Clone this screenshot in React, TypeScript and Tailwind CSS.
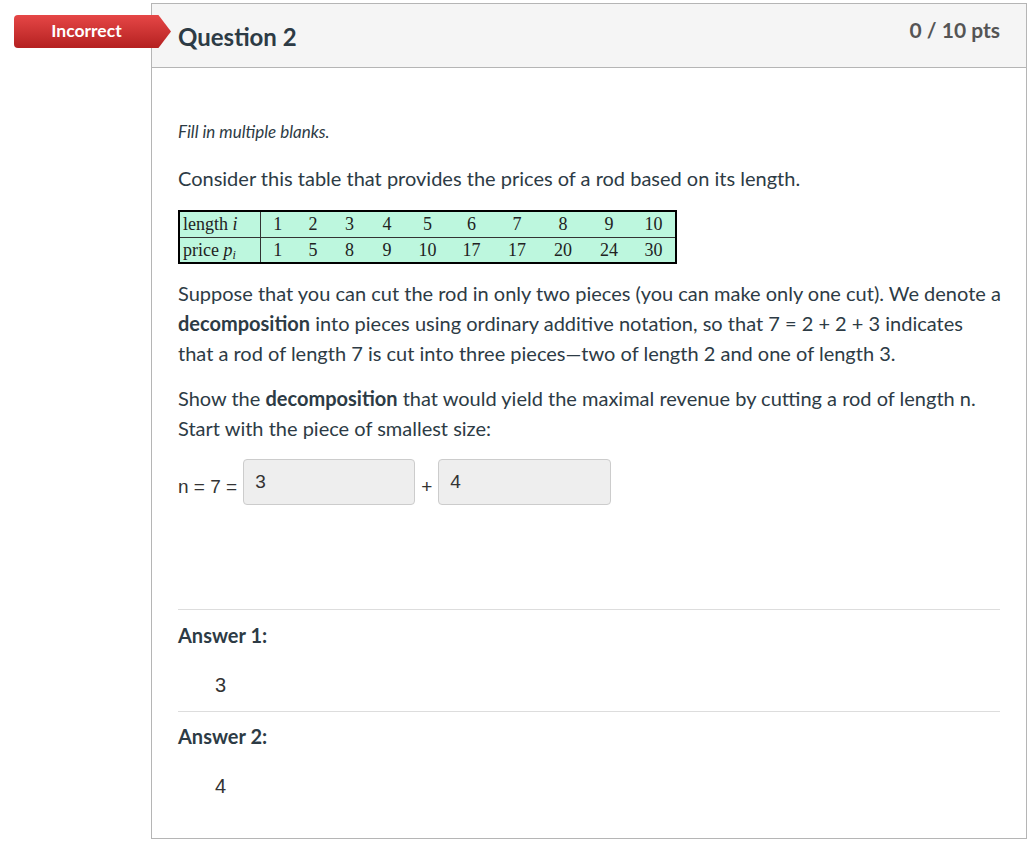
import React from 'react';

const lengths = [1, 2, 3, 4, 5, 6, 7, 8, 9, 10];
const prices = [1, 5, 8, 9, 10, 17, 17, 20, 24, 30];
const colW = ['w-[35px]', 'w-[36px]', 'w-[37px]', 'w-[38px]', 'w-[43px]', 'w-[45px]', 'w-[46px]', 'w-[46px]', 'w-[46px]', 'w-[44px]'];

function RodTable() {
  return (
    <table className="table-fixed border-2 border-black bg-[#bdf7de] font-['Liberation_Serif',serif] text-[18px] leading-[24px] text-[#222]">
      <tbody>
        <tr className="h-[26px] border-b border-[#333]">
          <td className="w-[81px] border-r border-[#333] pl-[3px]">
            length <i>i</i>
          </td>
          {lengths.map((n, i) => (
            <td key={i} className={colW[i] + ' text-center'}>
              {n}
            </td>
          ))}
        </tr>
        <tr className="h-[25px]">
          <td className="border-r border-[#333] pl-[3px]">
            price <i>p<sub className="text-[12px]">i</sub></i>
          </td>
          {prices.map((n, i) => (
            <td key={i} className="text-center">{n}</td>
          ))}
        </tr>
      </tbody>
    </table>
  );
}

export default function App() {
  return (
    <div className="relative min-h-[848px] bg-white font-['Lato','Liberation_Sans',sans-serif] text-[#2d3b45]">
      <div className="absolute left-[14px] top-[15px] z-10 flex h-[33px] w-[157px] items-center rounded-l-[4px] bg-gradient-to-b from-[#e64646] to-[#b42020] pr-[12px] [clip-path:polygon(0_0,92%_0,100%_50%,92%_100%,0_100%)]">
        <span className="w-full text-center text-[17.5px] font-bold text-white">Incorrect</span>
      </div>

      <div className="pl-[151px] pr-[6px] pt-[3px]">
        <div className="border border-[#b5b5b5]">
          <div className="flex h-[64px] items-start justify-between border-b border-[#b5b5b5] bg-[#f5f5f5] px-[26px]">
            <h2 className="pt-[18px] text-[24px] font-bold leading-[30px]">Question 2</h2>
            <div className="pt-[11px] text-[21px] font-bold leading-[30px] text-[#555]">0 / 10 pts</div>
          </div>

          <div className="pl-[26px] pr-[25px] pt-[49px] text-[20px] leading-[30px]">
            <p className="text-[17px] italic">Fill in multiple blanks.</p>
            <p className="mt-[16px]">Consider this table that provides the prices of a rod based on its length.</p>
            <div className="mt-[17px]">
              <RodTable />
            </div>
            <p className="mt-[14px]">
              Suppose that you can cut the rod in only two pieces (you can make only one cut). We denote a{' '}
              <b>decomposition</b> into pieces using ordinary additive notation, so that 7 = 2 + 2 + 3 indicates that a
              rod of length 7 is cut into three pieces—two of length 2 and one of length 3.
            </p>
            <p className="mt-[15px]">
              Show the <b>decomposition</b> that would yield the maximal revenue by cutting a rod of length n. Start with
              the piece of smallest size:
            </p>

            <div className="mt-[16px] flex items-start font-['Liberation_Sans',sans-serif] text-[19px] leading-[24px] text-[#333]">
              <span className="mr-[6px] pt-[16px]">n = 7 =</span>
              <div className="flex h-[46px] w-[172px] items-center rounded-[4px] border border-[#ccc] bg-[#eeeeee] px-[11px]">
                3
              </div>
              <span className="mx-[6px] pt-[16px]">+</span>
              <div className="flex h-[46px] w-[173px] items-center rounded-[4px] border border-[#ccc] bg-[#eeeeee] px-[11px]">
                4
              </div>
            </div>

            <div className="mt-[104px] mr-[1px] border-t border-[#dddddd]">
              <div className="pt-[10px] font-bold">Answer 1:</div>
              <div className="pb-[11px] pl-[37px] pt-[20px] font-['Liberation_Sans',sans-serif] text-[#333]">3</div>
            </div>
            <div className="mr-[1px] border-t border-[#dddddd]">
              <div className="pt-[9px] font-bold">Answer 2:</div>
              <div className="pb-[37px] pl-[37px] pt-[20px] font-['Liberation_Sans',sans-serif] text-[#333]">4</div>
            </div>
          </div>
        </div>
      </div>
    </div>
  );
}
